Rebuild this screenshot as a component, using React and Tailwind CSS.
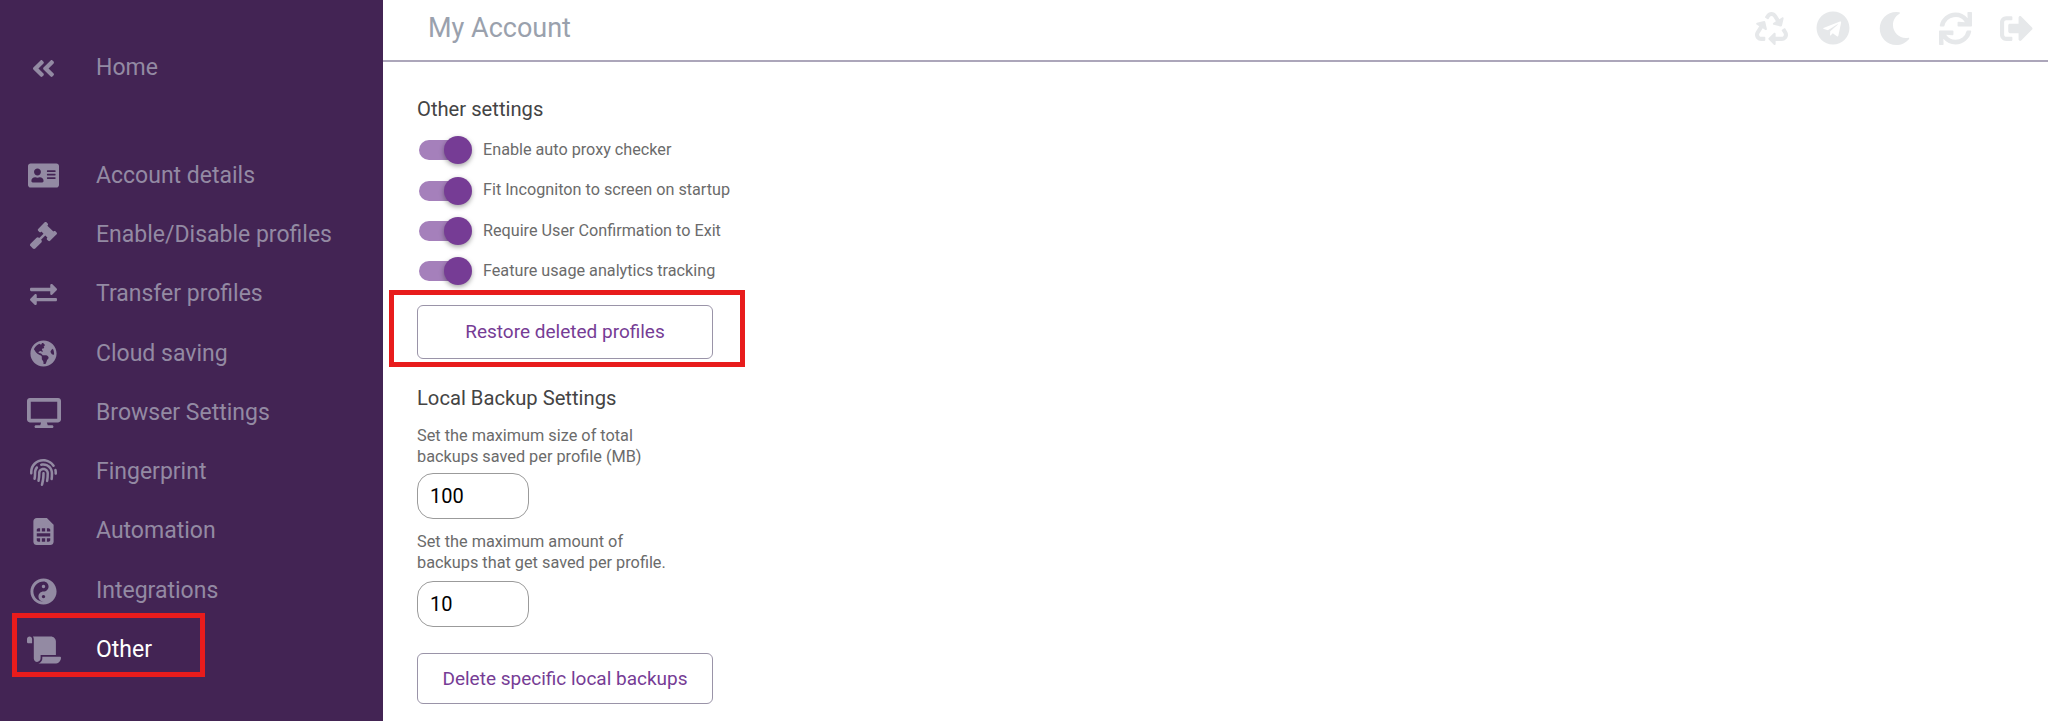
import {
  FaAngleDoubleLeft,
  FaAddressCard,
  FaGavel,
  FaExchangeAlt,
  FaGlobeAmericas,
  FaDesktop,
  FaFingerprint,
  FaSimCard,
  FaYinYang,
  FaScroll,
  FaRecycle,
  FaTelegram,
  FaMoon,
  FaSync,
  FaSignOutAlt,
} from 'react-icons/fa'

const navigation = [
  { name: 'Account details', icon: FaAddressCard, size: 31 },
  { name: 'Enable/Disable profiles', icon: FaGavel, size: 27 },
  { name: 'Transfer profiles', icon: FaExchangeAlt, size: 27 },
  { name: 'Cloud saving', icon: FaGlobeAmericas, size: 27 },
  { name: 'Browser Settings', icon: FaDesktop, size: 34 },
  { name: 'Fingerprint', icon: FaFingerprint, size: 27 },
  { name: 'Automation', icon: FaSimCard, size: 27 },
  { name: 'Integrations', icon: FaYinYang, size: 27 },
  { name: 'Other', icon: FaScroll, size: 34, active: true },
]

const toggles = [
  'Enable auto proxy checker',
  'Fit Incogniton to screen on startup',
  'Require User Confirmation to Exit',
  'Feature usage analytics tracking',
]

const headerIcons = [
  { icon: FaRecycle, size: 33 },
  { icon: FaTelegram, size: 34 },
  { icon: FaMoon, size: 33 },
  { icon: FaSync, size: 33 },
  { icon: FaSignOutAlt, size: 33 },
]

function NavRow({ item }) {
  const Icon = item.icon
  return (
    <div className="flex h-[59.3px] items-center">
      <div className="flex w-[96px] justify-center pr-[9px] text-[#938aa3]">
        <Icon size={item.size} />
      </div>
      <span className={`text-[23px] ${item.active ? 'text-white' : 'text-[#938aa3]'}`}>{item.name}</span>
    </div>
  )
}

function Toggle({ label }) {
  return (
    <div className="flex h-[40.4px] items-center">
      <div className="relative ml-[2px] h-[20px] w-[50px] rounded-full bg-[#a580bb]">
        <div className="absolute -top-[4px] left-[25px] h-[28px] w-[28px] rounded-full bg-[#763c95] shadow-[0_2px_5px_rgba(0,0,0,0.35)]" />
      </div>
      <span className="ml-[14px] text-[16.2px] text-[#6b6b6b]">{label}</span>
    </div>
  )
}

function OutlineButton({ label, className }) {
  return (
    <button className={`block w-[296px] rounded-[6px] border border-[#9a94a8] pt-[2px] text-[19px] text-[#763c95] ${className}`}>
      {label}
    </button>
  )
}

function NumberField({ value }) {
  return (
    <div className="flex h-[46px] w-[112px] items-center rounded-[16px] border border-[#9b9b9b] pl-[12px] text-[20px] text-black">
      {value}
    </div>
  )
}

export default function App() {
  return (
    <div className="relative flex h-[721px] w-[2048px] overflow-hidden bg-white font-['Roboto',sans-serif]">
      {/* Sidebar */}
      <aside className="h-full w-[383px] shrink-0 bg-[#432454] pt-[39px]">
        <NavRow item={{ name: 'Home', icon: FaAngleDoubleLeft, size: 27 }} />
        <div className="mt-[48px]">
          {navigation.map((item) => (
            <NavRow key={item.name} item={item} />
          ))}
        </div>
      </aside>

      {/* Main */}
      <div className="flex-1">
        <header className="flex h-[62px] items-center justify-between border-b-2 border-[#aca6ba] pl-[45px] pr-[15px]">
          <h1 className="pb-[3px] text-[27px] text-[#9aa1ad]">My Account</h1>
          <div className="flex items-center gap-[28px] pb-[4px] text-[#e6e8ea]">
            {headerIcons.map((item, i) => {
              const Icon = item.icon
              return <Icon key={i} size={item.size} />
            })}
          </div>
        </header>

        <main className="pl-[34px] pt-[34px]">
          <h2 className="text-[20.2px] leading-[26px] text-[#444444]">Other settings</h2>
          <div className="mt-[8px]">
            {toggles.map((label) => (
              <Toggle key={label} label={label} />
            ))}
          </div>
          <OutlineButton label="Restore deleted profiles" className="mt-[13px] h-[54px]" />

          <h2 className="mt-[26px] text-[20.2px] leading-[26px] text-[#444444]">Local Backup Settings</h2>
          <p className="mt-[14px] text-[16.3px] leading-[21px] text-[#6b6b6b]">
            Set the maximum size of total
            <br />
            backups saved per profile (MB)
          </p>
          <div className="mt-[6px]">
            <NumberField value="100" />
          </div>
          <p className="mt-[12px] text-[16.3px] leading-[21px] text-[#6b6b6b]">
            Set the maximum amount of
            <br />
            backups that get saved per profile.
          </p>
          <div className="mt-[8px]">
            <NumberField value="10" />
          </div>
          <OutlineButton label="Delete specific local backups" className="mt-[26px] h-[51px]" />
        </main>
      </div>

      {/* Red annotation boxes */}
      <div className="absolute left-[12px] top-[613px] h-[64px] w-[193px] border-[5px] border-[#e81c1c]" />
      <div className="absolute left-[389px] top-[290px] h-[77px] w-[356px] border-[5px] border-[#e81c1c]" />
    </div>
  )
}
